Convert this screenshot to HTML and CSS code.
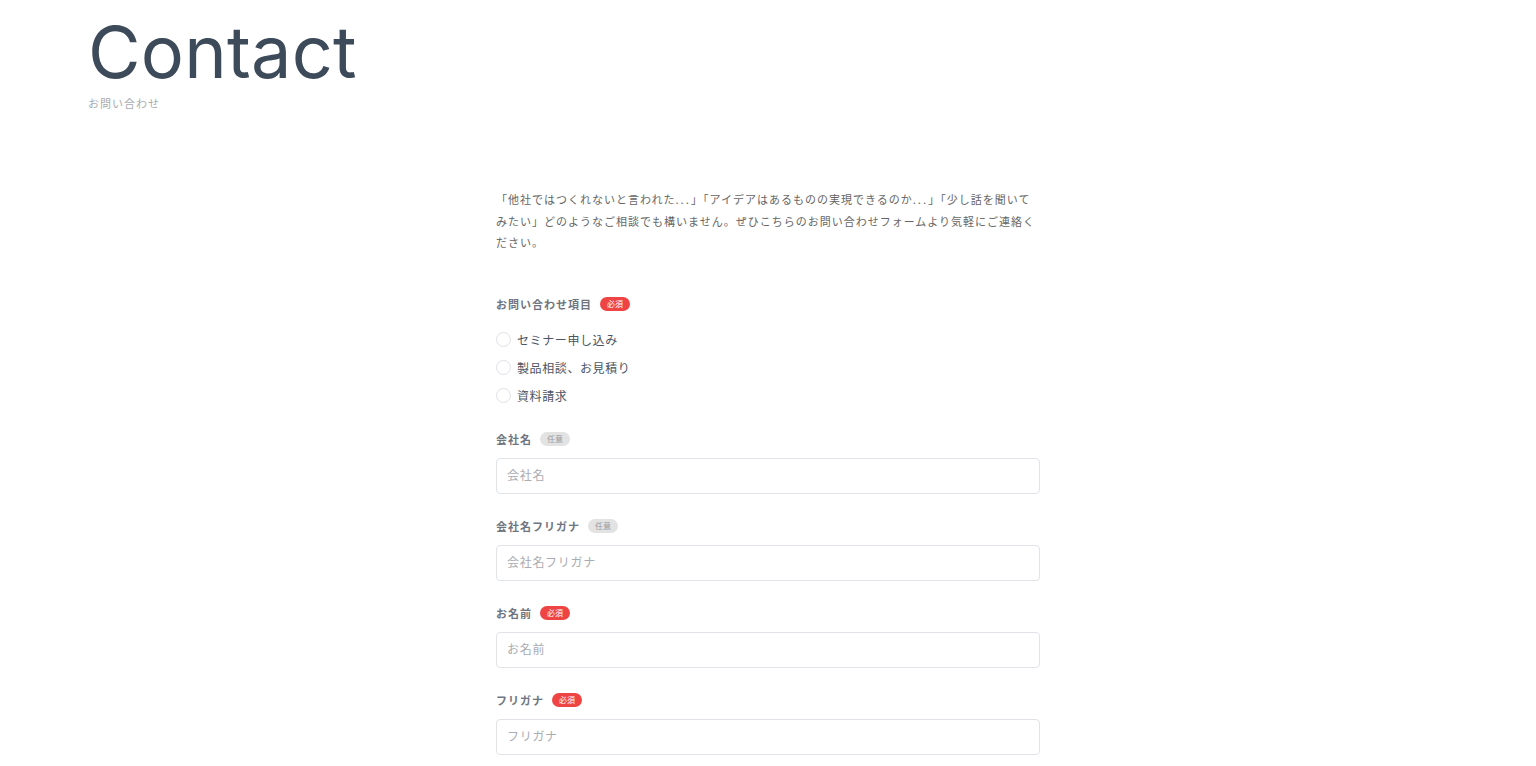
FILE: index.html
```html
<!DOCTYPE html>
<html lang="ja">
<head>
  <meta charset="UTF-8" />
  <meta name="viewport" content="width=device-width, initial-scale=1.0"/>
  <title>Contact</title>
  <link rel="stylesheet" href="styles.css">
</head>
<body>
  <header class="page-head">
    <h1 class="page-title">Contact</h1>
    <p class="page-sub">お問い合わせ</p>
  </header>

  <main class="contact">
    <p class="intro">「他社ではつくれないと言われた<span class="dots">...</span>」「アイデアはあるものの実現できるのか<span class="dots">...</span>」「少し話を聞いてみたい」どのようなご相談でも構いません。ぜひこちらのお問い合わせフォームより気軽にご連絡ください。</p>

    <form class="form">
      <div class="field field-radio">
        <div class="label">お問い合わせ項目<span class="badge req">必須</span></div>
        <div class="radios">
          <label class="radio"><input type="radio" name="kind" /><span>セミナー申し込み</span></label>
          <label class="radio"><input type="radio" name="kind" /><span>製品相談、お見積り</span></label>
          <label class="radio"><input type="radio" name="kind" /><span>資料請求</span></label>
        </div>
      </div>

      <div class="field">
        <div class="label">会社名<span class="badge opt">任意</span></div>
        <input class="text" type="text" placeholder="会社名" />
      </div>

      <div class="field">
        <div class="label">会社名フリガナ<span class="badge opt">任意</span></div>
        <input class="text" type="text" placeholder="会社名フリガナ" />
      </div>

      <div class="field">
        <div class="label">お名前<span class="badge req">必須</span></div>
        <input class="text" type="text" placeholder="お名前" />
      </div>

      <div class="field">
        <div class="label">フリガナ<span class="badge req">必須</span></div>
        <input class="text" type="text" placeholder="フリガナ" />
      </div>
    </form>
  </main>
</body>
</html>
```

FILE: styles.css
```css
body {
  font-family: Inter, "Noto Sans CJK JP", sans-serif;
  background: #fff;
  color: #666;
  margin: 0;
  padding: 0;
}
.page-head {
  padding: 16px 88px 0;
}
.page-title {
  margin: 0;
  font-size: 72px;
  line-height: 1;
  font-weight: 400;
  color: #3d4a5a;
  letter-spacing: 0.2px;
}
.page-sub {
  margin: 8px 0 0;
  font-size: 11px;
  line-height: 16px;
  letter-spacing: 1px;
  color: #a7abb2;
}
.contact {
  width: 544px;
  margin: 78px auto 0;
}
.intro {
  margin: 0;
  font-size: 11px;
  line-height: 21.5px;
  letter-spacing: 1px;
  color: #666;
}
.dots {
  letter-spacing: 2px;
}
.form {
  margin-top: 39px;
}
.field {
  margin-bottom: 22px;
}
.field-radio {
  margin-bottom: 19px;
}
.label {
  display: flex;
  align-items: center;
  height: 20px;
  font-size: 11px;
  letter-spacing: 1px;
  font-weight: 700;
  color: #6f7580;
  margin-bottom: 9px;
}
.badge {
  display: inline-block;
  margin-left: 8px;
  width: 30px;
  height: 14px;
  line-height: 14px;
  border-radius: 7px;
  font-size: 8px;
  font-weight: 400;
  letter-spacing: 0;
  text-align: center;
}
.req {
  background: #ef4444;
  color: #fff;
}
.opt {
  background: #e3e3e3;
  color: #999;
}
.radios {
  display: flex;
  flex-direction: column;
  padding-top: 3px;
}
.radio {
  display: flex;
  align-items: center;
  height: 28px;
  font-size: 12px;
  letter-spacing: 0.6px;
  color: #4b5563;
}
.radio input {
  appearance: none;
  width: 15px;
  height: 15px;
  margin: 0 6px 0 0;
  border: 1px solid #dfe1e6;
  border-radius: 50%;
  background: #fff;
}
.text {
  display: block;
  box-sizing: border-box;
  width: 100%;
  height: 36px;
  padding: 0 10px;
  border: 1px solid #e1e3e8;
  border-radius: 4px;
  font-family: inherit;
  font-size: 12px;
  letter-spacing: 0.7px;
  color: #444;
}
.text::placeholder {
  color: #a9acb2;
}
```
